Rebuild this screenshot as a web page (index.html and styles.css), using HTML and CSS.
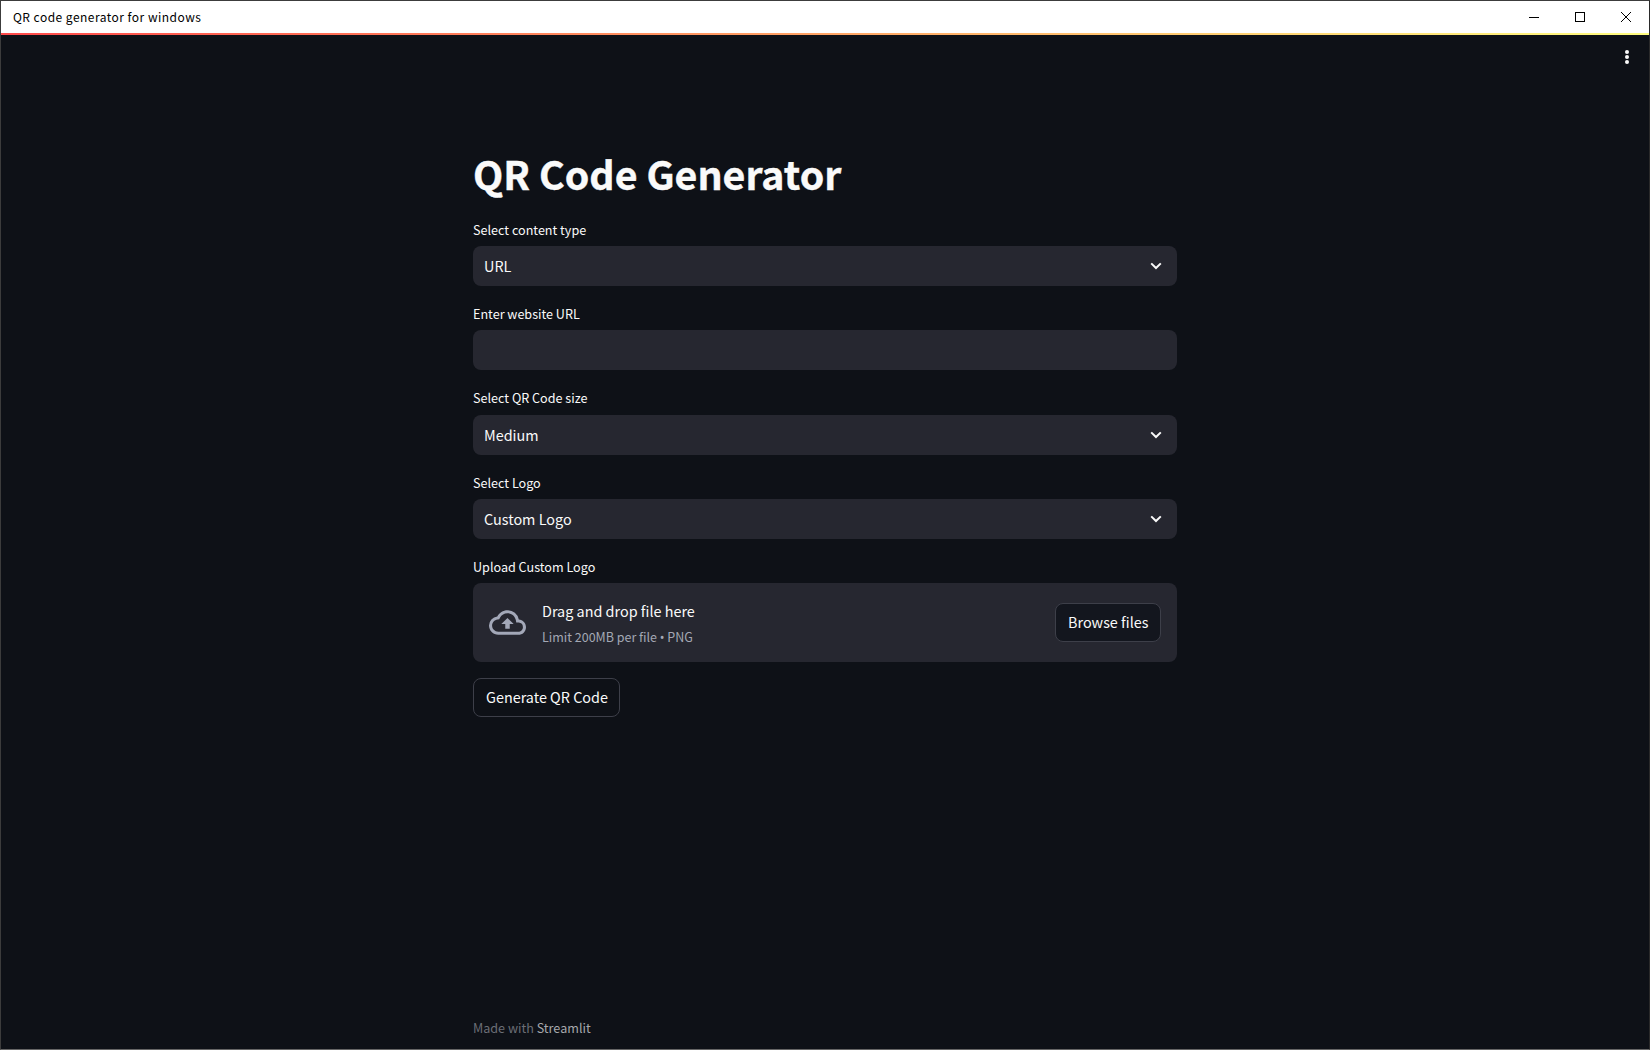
FILE: index.html
```html
<!DOCTYPE html>
<html lang="en">
<head>
<meta charset="utf-8">
<title>QR code generator for windows</title>
<link rel="stylesheet" href="styles.css">
</head>
<body>
<div class="window">
  <header class="titlebar">
    <span class="title-text">QR code generator for windows</span>
    <div class="win-controls">
      <span class="win-btn"><svg width="12" height="12" viewBox="0 0 12 12"><path d="M1 6.5h10" stroke="#000" fill="none"/></svg></span>
      <span class="win-btn"><svg width="12" height="12" viewBox="0 0 12 12"><rect x="1.5" y="1.5" width="9" height="9" stroke="#000" fill="none"/></svg></span>
      <span class="win-btn"><svg width="12" height="12" viewBox="0 0 12 12"><path d="M1 1l10 10M11 1L1 11" stroke="#000" fill="none"/></svg></span>
    </div>
  </header>
  <div class="accent"></div>
  <main class="app">
    <button class="kebab" aria-label="Menu"><i></i><i></i><i></i></button>
    <section class="content">
      <h1 class="heading">QR Code Generator</h1>
      <div class="fields">
        <div class="field">
          <label class="label">Select content type</label>
          <div class="control"><span>URL</span><svg class="chevron" viewBox="0 0 12 8"><path d="M1.2 1.4L6 6l4.8-4.6" fill="none" stroke="#fafafa" stroke-width="2"/></svg></div>
        </div>
        <div class="field">
          <label class="label">Enter website URL</label>
          <div class="control"></div>
        </div>
        <div class="field">
          <label class="label">Select QR Code size</label>
          <div class="control"><span>Medium</span><svg class="chevron" viewBox="0 0 12 8"><path d="M1.2 1.4L6 6l4.8-4.6" fill="none" stroke="#fafafa" stroke-width="2"/></svg></div>
        </div>
        <div class="field">
          <label class="label">Select Logo</label>
          <div class="control"><span>Custom Logo</span><svg class="chevron" viewBox="0 0 12 8"><path d="M1.2 1.4L6 6l4.8-4.6" fill="none" stroke="#fafafa" stroke-width="2"/></svg></div>
        </div>
        <div class="field">
          <label class="label">Upload Custom Logo</label>
          <div class="dropzone">
            <svg class="cloud" viewBox="0 0 24 24"><path fill="#a3a8b8" d="M19.35 10.04A7.49 7.49 0 0 0 12 4C9.11 4 6.6 5.64 5.35 8.04A5.994 5.994 0 0 0 0 14c0 3.31 2.69 6 6 6h13c2.76 0 5-2.24 5-5 0-2.64-2.05-4.78-4.65-4.96zM19 18H6c-2.21 0-4-1.79-4-4 0-2.05 1.53-3.76 3.56-3.97l1.07-.11.5-.95A5.469 5.469 0 0 1 12 6c2.62 0 4.88 1.86 5.39 4.43l.3 1.5 1.53.11A2.98 2.98 0 0 1 22 15c0 1.65-1.35 3-3 3zM8 13h2.55v3h2.9v-3H16l-4-4-4 4z"/></svg>
            <div class="drop-text">
              <span class="drop-title">Drag and drop file here</span>
              <small class="drop-limit">Limit 200MB per file <span class="sep">•</span> PNG</small>
            </div>
            <button class="btn browse">Browse files</button>
          </div>
        </div>
        <div><button class="btn generate">Generate QR Code</button></div>
      </div>
    </section>
    <footer class="footer">Made with <span class="brand">Streamlit</span></footer>
  </main>
</div>
</body>
</html>
```
FILE: styles.css
```css
* { box-sizing: border-box; }
html, body { margin: 0; height: 100%; }
body { background: #0e1117; overflow: hidden; }
.window {
  height: 1050px;
  display: flex;
  flex-direction: column;
  border: 1px solid #3c3c3c;
  border-right-color: #2a2a2a;
  border-bottom-color: #666;
  font-family: "Noto Sans CJK SC", "Noto Sans", sans-serif;
  color: #fafafa;
}
.titlebar {
  height: 32px;
  flex: none;
  background: #fff;
  display: flex;
  align-items: center;
  justify-content: space-between;
  padding-left: 12px;
  color: #000;
}
.title-text { font: 12px/1 "Noto Sans CJK SC", sans-serif; letter-spacing: .47px; }
.win-controls { display: flex; }
.win-btn { width: 46px; height: 32px; display: flex; align-items: center; justify-content: center; }
.accent { height: 2px; flex: none; background: linear-gradient(90deg, #ff4b4b, #fffd80); }
.app { flex: 1; position: relative; display: flex; flex-direction: column; background: #0e1117; }
.kebab {
  position: absolute; top: 15px; right: 20px;
  display: flex; flex-direction: column; gap: 1px;
  padding: 0; background: none; border: 0;
}
.kebab i { width: 4px; height: 4px; border-radius: 50%; background: #fafafa; }
.content { width: 704px; margin-left: 472px; padding-top: 105px; flex: 1; }
.heading {
  margin: 0;
  font-size: 39.3px;
  font-weight: 700;
  line-height: 66px;
  height: 77.75px;
  color: #fafafa;
  -webkit-text-stroke: .4px #fafafa;
}
.fields { display: flex; flex-direction: column; gap: 16px; }
.field { display: flex; flex-direction: column; }
.label { height: 28.3px; font-size: 12.6px; line-height: 20px; padding-top: 2px; }
.control {
  height: 40px;
  background: #262730;
  border-radius: 8px;
  display: flex;
  align-items: center;
  justify-content: space-between;
  padding: 0 15px 1px 11px;
  font-size: 14.4px;
}
.chevron { width: 12px; height: 8px; margin-top: 1px; }
.dropzone {
  height: 79px;
  background: #262730;
  border-radius: 8px;
  display: flex;
  align-items: center;
  padding: 0 16px;
}
.cloud { width: 37px; height: 37px; flex: none; margin-right: 16px; }
.drop-text { flex: 1; display: flex; flex-direction: column; gap: 4px; padding-top: 2px; }
.drop-title { font-size: 14.4px; line-height: 24px; }
.drop-limit { font-size: 12.5px; line-height: 20px; color: #a3a8b4; }
.sep { font-family: "Noto Sans", sans-serif; }
.btn {
  font-family: inherit;
  font-size: 14.4px;
  color: #fafafa;
  background: #13161e;
  border: 1px solid #3d3f49;
  border-radius: 8px;
  padding: 0 11.5px 2px 12px;
  height: 38.5px;
}
.generate { background: #0e1117; height: 39px; }
.footer {
  position: absolute;
  left: 472px;
  bottom: 11px;
  font-size: 12.6px;
  line-height: 20px;
  color: #6b6e76;
}
.brand { color: #a6a8ac; }
```
